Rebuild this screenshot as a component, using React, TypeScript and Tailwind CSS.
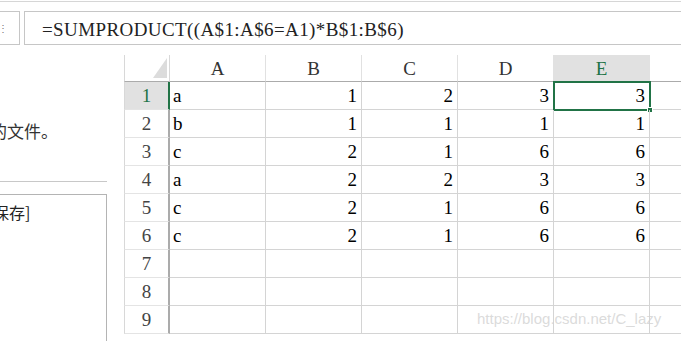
import React from "react";

const cols = ["A", "B", "C", "D", "E"];

const rows: (string | number)[][] = [
  ["a", 1, 2, 3, 3],
  ["b", 1, 1, 1, 1],
  ["c", 2, 1, 6, 6],
  ["a", 2, 2, 3, 3],
  ["c", 2, 1, 6, 6],
  ["c", 2, 1, 6, 6],
  ["", "", "", "", ""],
  ["", "", "", "", ""],
  ["", "", "", "", ""],
];

const serif = "font-['Liberation_Serif','Times_New_Roman',serif]";

export default function App() {
  return (
    <div className="w-[681px] h-[341px] overflow-hidden bg-white relative">
      {/* top strip */}
      <div className="h-px mt-px bg-[#d6d6d6]" />

      {/* formula bar */}
      <div className="flex mt-[9px] h-[34px]">
        <div className="w-[21px] shrink-0 -ml-px border border-[#c6c6c6] flex items-center">
          <span className="text-[10px] leading-none text-[#777] -ml-[2px]">⋮</span>
        </div>
        <div className="ml-[4px] w-[700px] shrink-0 border border-[#c6c6c6] flex items-center pl-[17px]">
          <span className={`${serif} text-[19px] tracking-[0.4px] leading-none text-[#222] pt-[2px] whitespace-nowrap`}>
            =SUMPRODUCT((A$1:A$6=A1)*B$1:B$6)
          </span>
        </div>
      </div>

      {/* body */}
      <div className="flex mt-[10px]">
        {/* left pane */}
        <div className="w-[107px] shrink-0 overflow-hidden">
          <p className="mt-[67px] h-[17px] -ml-[10px] whitespace-nowrap font-['Noto_Sans_CJK_SC',sans-serif] text-[17px] leading-none text-[#333]">
            的文件。
          </p>
          <div className="mt-[42px] h-px bg-[#c8c8c8]" />
          <div className="mt-[12px] h-[160px] border-t border-r border-[#b4b4b4] pt-[9px]">
            <p className="-ml-[7px] whitespace-nowrap font-['Noto_Sans_CJK_SC',sans-serif] text-[16px] leading-none text-[#222]">
              保存]
            </p>
          </div>
        </div>

        {/* spreadsheet grid */}
        <div className="ml-[17px] flex flex-col">
          {/* column headers */}
          <div className="flex h-[27px]">
            <div className="w-[46px] shrink-0 border-l border-r border-[#d8d8d8] border-b-[#ababab] border-b relative">
              <svg className="absolute right-[2px] bottom-[3px]" width="14" height="20" viewBox="0 0 14 20">
                <polygon points="14,0 14,20 0,20" fill="#dcdcdc" />
              </svg>
            </div>
            {cols.map((c) => (
              <div
                key={c}
                className={`w-[96px] shrink-0 border-r border-r-[#e1e1e1] border-b border-b-[#ababab] flex items-center justify-center ${serif} text-[19px] leading-none ${
                  c === "E" ? "bg-[#e1e1e1] text-[#217346] border-b-[#217346]" : "text-[#333]"
                }`}
              >
                {c}
              </div>
            ))}
            <div className="w-[40px] shrink-0 border-b border-b-[#ababab]" />
          </div>

          {/* rows */}
          {rows.map((r, i) => (
            <div key={i} className="flex h-[28px]">
              <div
                className={`w-[46px] shrink-0 border-l border-l-[#d8d8d8] border-b border-b-[#e4e4e4] border-r-2 flex items-center justify-center ${serif} text-[19px] leading-none ${
                  i === 0 ? "bg-[#e1e1e1] text-[#217346] border-r-[#217346]" : "text-[#444] border-r-[#ababab]"
                }`}
              >
                {i + 1}
              </div>
              {r.map((v, j) => {
                const sel = i === 0 && j === 4;
                return (
                  <div
                    key={j}
                    className={`w-[96px] shrink-0 border-r border-b border-[#d4d4d4] flex items-center ${serif} text-[19px] leading-none text-black relative ${
                      typeof v === "number" ? "justify-end pr-[4px]" : "justify-start pl-[3px]"
                    }`}
                  >
                    {sel && (
                      <div className="absolute -left-px -top-px w-[98px] h-[30px] border-2 border-[#217346]">
                        <div className="absolute -right-[4px] -bottom-[4px] w-[6px] h-[6px] bg-[#217346] border border-white" />
                      </div>
                    )}
                    <span className="relative">{v}</span>
                  </div>
                );
              })}
              <div className="w-[40px] shrink-0 border-b border-[#d4d4d4]" />
            </div>
          ))}
        </div>
      </div>

      {/* watermark */}
      <div className="absolute left-[477px] top-[311px] font-['Liberation_Sans',Arial,sans-serif] text-[15px] leading-none text-[#d2d2d2]/80 whitespace-nowrap">
        https://blog.csdn.net/C_lazy
      </div>
    </div>
  );
}
